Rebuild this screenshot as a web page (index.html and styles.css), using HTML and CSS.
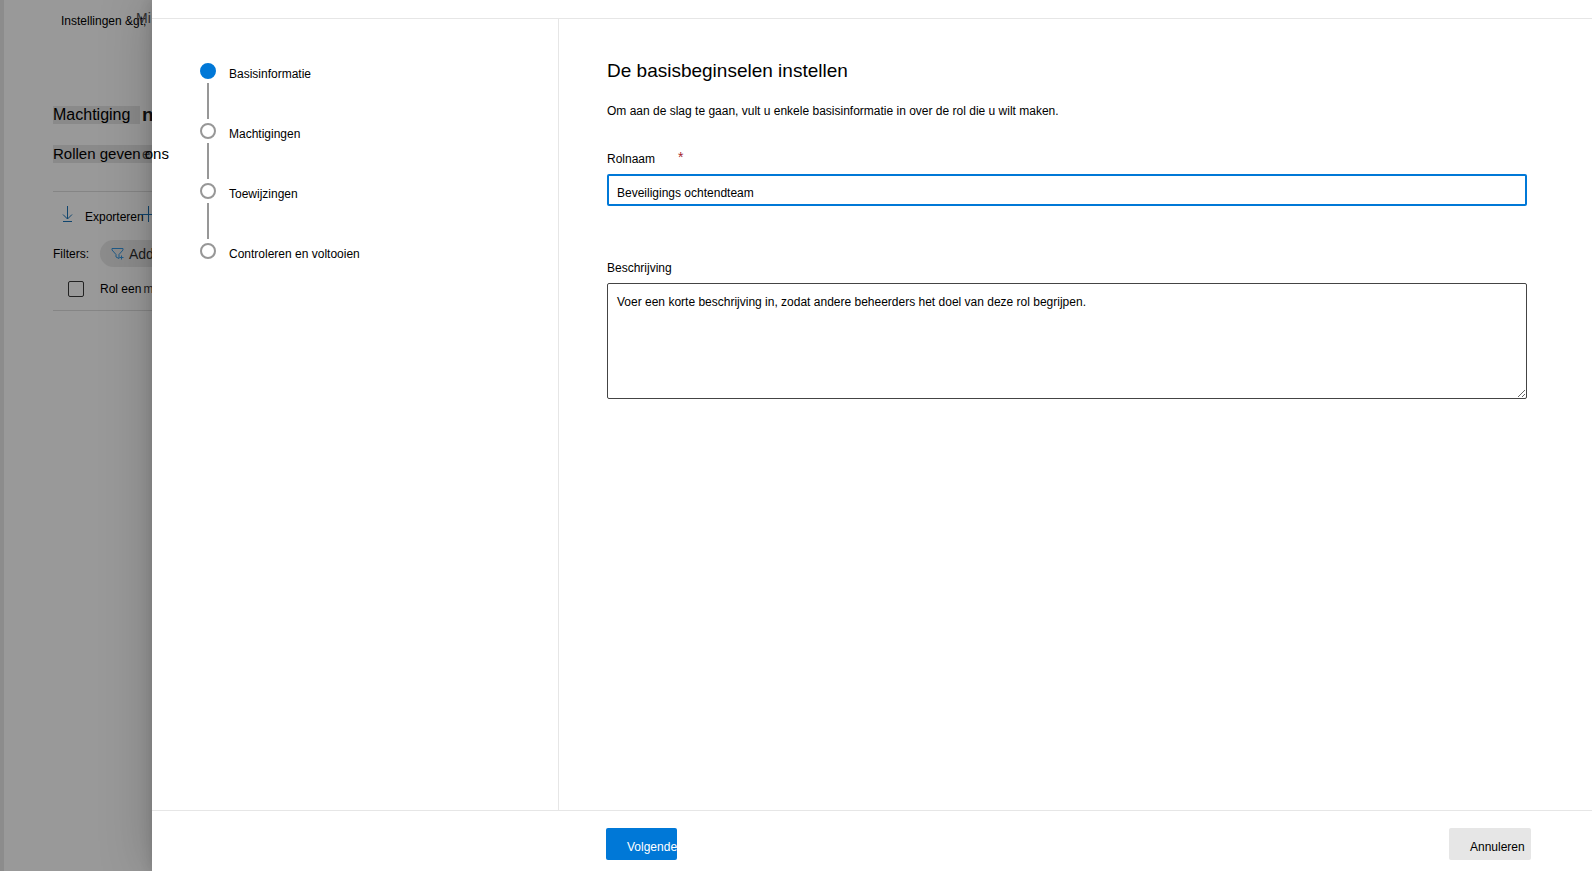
FILE: index.html
```html
<!DOCTYPE html>
<html lang="nl">
  <head>
    <meta charset="UTF-8" />
    <meta name="viewport" content="width=device-width, initial-scale=1.0" />
    <title>De basisbeginselen instellen</title>
    <link rel="stylesheet" href="styles.css">
  </head>
  <body>
    <div class="page">
      <div class="backdrop">
        <div class="breadcrumb">Instellingen &amp;gt;<span class="crumb-next">Mi</span></div>
        <h2 class="page-title"><span class="mark">Machtiging</span><b class="title-rest">n</b></h2>
        <p class="page-text"><span class="page-text-label">Rollen geven ons</span><span class="text-rest">e</span></p>
        <div class="toolbar">
          <svg class="icon-download" width="12" height="18" viewBox="0 0 12 18" fill="none" stroke="#10456e">
            <path d="M5.500 1v13M1 9.500L5.500 14l4.500-4.500M1 16.500h9" />
          </svg>
          <span class="export">Exporteren</span>
          <svg class="icon-plus" width="16" height="16" viewBox="0 0 16 16" fill="none" stroke="#10456e">
            <path d="M8.500 0v16M0 8.500h16" />
          </svg>
        </div>
        <div class="filters">
          <span class="filters-label">Filters:</span>
          <button class="add-filter" type="button">
            <svg width="14" height="14" viewBox="0 0 14 14" fill="none" stroke="#1f5a87">
              <path d="M1 1.500h11v1.500L8 7.500V11.500L5 10V7.500L1 3zM10.500 8.500v4M8.500 10.500h4" />
            </svg>
            Add
          </button>
        </div>
        <div class="list-head">
          <input class="check" type="checkbox" id="all" />
          <label class="check-label" for="all">Rol een<span class="check-rest">me</span></label>
        </div>
      </div>

      <div class="panel">
        <div class="panel-top"></div>
        <div class="panel-body">
          <ol class="steps">
            <li class="step active"><span class="dot"></span><span class="step-label">Basisinformatie</span></li>
            <li class="step"><span class="dot"></span><span class="step-label">Machtigingen</span></li>
            <li class="step"><span class="dot"></span><span class="step-label">Toewijzingen</span></li>
            <li class="step"><span class="dot"></span><span class="step-label">Controleren en voltooien</span></li>
          </ol>
          <form class="content" id="role-form">
            <h1 class="title">De basisbeginselen instellen</h1>
            <p class="intro">Om aan de slag te gaan, vult u enkele basisinformatie in over de rol die u wilt maken.</p>
            <label class="label" for="name">Rolnaam <span class="required">*</span></label>
            <input class="input" type="text" id="name" value="Beveiligings ochtendteam" />
            <label class="label" for="description">Beschrijving</label>
            <textarea class="textarea" id="description">Voer een korte beschrijving in, zodat andere beheerders het doel van deze rol begrijpen.</textarea>
          </form>
        </div>
        <div class="panel-footer">
          <button class="button primary" type="submit" form="role-form">Volgende</button>
          <button class="button" type="button">Annuleren</button>
        </div>
      </div>
    </div>
  </body>
</html>
```
FILE: styles.css
```css
* {
  margin: 0;
  padding: 0;
  box-sizing: border-box;
}

body,
button,
input,
textarea {
  font-family: "Liberation Sans", Arial, sans-serif;
  font-size: 12px;
  line-height: 16px;
  color: #000;
}

.page {
  display: flex;
  min-height: 100vh;
  overflow: hidden;
}

/* dimmed page behind the panel */
.backdrop {
  width: 152px;
  flex-shrink: 0;
  padding: 13px 0 0 49px;
  border-left: 4px solid #8c8c8c;
  background-color: #999;
  white-space: nowrap;
}
.breadcrumb {
  position: relative;
  padding-left: 8px;
}
.crumb-next {
  position: absolute;
  left: 83px;
  top: -3px;
  font-size: 14px;
  color: #333;
}
.page-title {
  position: relative;
  margin-top: 77px;
  font-size: 16px;
  font-weight: normal;
  line-height: 18px;
}
.mark {
  display: inline-block;
  padding-right: 10px;
  background-color: #8a8a8a;
}
.title-rest {
  position: absolute;
  left: 89px;
  top: 0;
  font-size: 19px;
  color: #111;
}
.page-text {
  position: relative;
  margin-top: 21px;
  font-size: 15px;
  line-height: 18px;
  background-color: #8a8a8a;
}
.page-text-label {
  position: relative;
  z-index: 2;
}
.text-rest {
  position: absolute;
  left: 89px;
  top: 0;
  color: #333;
}
.toolbar {
  position: relative;
  display: flex;
  align-items: center;
  height: 49px;
  margin-top: 28px;
  padding: 0 0 4px 9px;
  border-top: 1px solid #858585;
}
.export {
  margin: 6px 0 0 11px;
}
.icon-plus {
  position: absolute;
  left: 87px;
  top: 14px;
}
.filters {
  display: flex;
  align-items: center;
}
.filters-label {
  flex-shrink: 0;
  width: 47px;
}
.add-filter {
  display: flex;
  align-items: center;
  flex-shrink: 0;
  gap: 4px;
  height: 27px;
  padding: 0 11px;
  border: 0;
  border-radius: 14px;
  background-color: #8c8c8c;
  font-size: 14px;
  color: #1a1a1a;
}
.list-head {
  display: flex;
  align-items: center;
  height: 44px;
  padding-left: 15px;
  border-bottom: 1px solid #858585;
}
.check {
  appearance: none;
  flex-shrink: 0;
  width: 16px;
  height: 16px;
  border: 1px solid #222;
  border-radius: 2px;
}
.check-label {
  display: flex;
  gap: 2px;
  margin-left: 16px;
}
.check-rest {
  color: #222;
}

.panel {
  position: relative;
  z-index: 1;
  flex: 1;
  display: flex;
  flex-direction: column;
  background-color: #fff;
  box-shadow: 0 0 50px rgba(0, 0, 0, 0.22), 0 0 12px rgba(0, 0, 0, 0.14);
}
.panel-top {
  height: 19px;
  border-bottom: 1px solid #e6e6e6;
}
.panel-body {
  flex: 1;
  display: flex;
}

.steps {
  width: 407px;
  padding: 44px 48px;
  border-right: 1px solid #e6e6e6;
  list-style: none;
}
.step {
  position: relative;
  display: flex;
  gap: 13px;
  height: 60px;
}
.dot {
  width: 16px;
  height: 16px;
  border: 2px solid #979797;
  border-radius: 50%;
}
.active .dot {
  border-color: #0078d7;
  background-color: #0078d7;
}
.step-label {
  padding-top: 3px;
}
/* line between two dots */
.step:not(:last-child)::after {
  content: "";
  position: absolute;
  left: 7px;
  top: 20px;
  width: 2px;
  height: 36px;
  background-color: #979797;
}

.content {
  flex: 1;
  display: flex;
  flex-direction: column;
  padding: 40px 65px 40px 48px;
}
.title {
  font-size: 19px;
  font-weight: normal;
  line-height: 24px;
}
.intro {
  margin: 20px 0 32px;
}
.label {
  display: flex;
  gap: 23px;
  margin-bottom: 7px;
}
.required {
  height: 8px;
  font-size: 14px;
  line-height: 12px;
  color: #a4262c;
}
.input {
  height: 32px;
  margin-bottom: 54px;
  padding: 9px 8px 3px;
  border: 2px solid #0078d7;
  border-radius: 2px;
  outline: 0;
}
.textarea {
  height: 116px;
  padding: 10px 9px;
  border: 1px solid #444;
  border-radius: 2px;
  outline: 0;
  resize: vertical;
}

.panel-footer {
  display: flex;
  justify-content: space-between;
  padding: 17px 61px 11px 454px;
  border-top: 1px solid #e6e6e6;
}
.button {
  width: 82px;
  height: 32px;
  padding: 10px 0 4px 21px;
  border: 0;
  border-radius: 2px;
  background-color: #e6e6e6;
  text-align: left;
  white-space: nowrap;
}
.primary {
  width: 71px;
  background-color: #0078d7;
  color: #fff;
}
```
